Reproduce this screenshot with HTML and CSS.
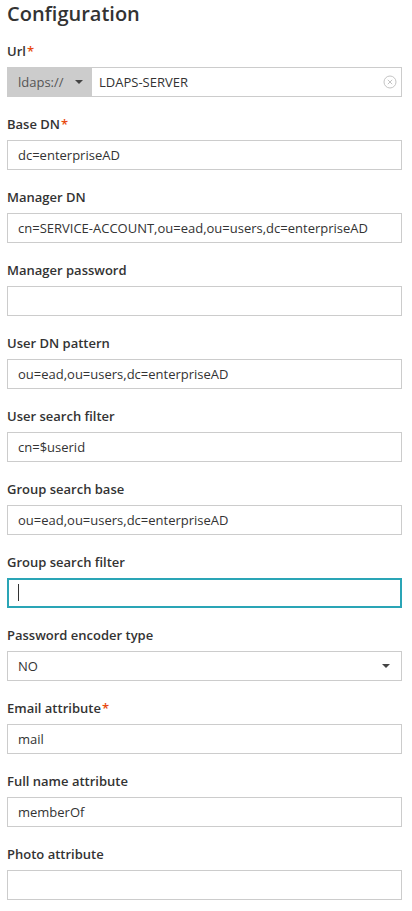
FILE: index.html
```html
<!DOCTYPE html>
<html>
<head>
<meta charset="utf-8">
<link rel="stylesheet" href="styles.css">
</head>
<body>
<div class="page">
  <h1 class="title">Configuration</h1>

  <div class="field">
    <div class="label">Url<span class="req">*</span></div>
    <div class="group">
      <div class="addon"><span>ldaps://</span><span class="caret-down"></span></div>
      <input class="group-input" type="text" value="LDAPS-SERVER">
      <svg class="clear" width="14" height="14" viewBox="0 0 14 14"><circle cx="7" cy="7" r="6" fill="none" stroke="#c4c4c4" stroke-width="1"/><path d="M4.8 4.8 L9.2 9.2 M9.2 4.8 L4.8 9.2" stroke="#c4c4c4" stroke-width="1"/></svg>
    </div>
  </div>

  <div class="field">
    <div class="label">Base DN<span class="req">*</span></div>
    <input class="input" type="text" value="dc=enterpriseAD">
  </div>

  <div class="field">
    <div class="label">Manager DN</div>
    <input class="input" type="text" value="cn=SERVICE-ACCOUNT,ou=ead,ou=users,dc=enterpriseAD">
  </div>

  <div class="field">
    <div class="label">Manager password</div>
    <input class="input" type="password" value="">
  </div>

  <div class="field">
    <div class="label">User DN pattern</div>
    <input class="input" type="text" value="ou=ead,ou=users,dc=enterpriseAD">
  </div>

  <div class="field">
    <div class="label">User search filter</div>
    <input class="input" type="text" value="cn=$userid">
  </div>

  <div class="field">
    <div class="label">Group search base</div>
    <input class="input" type="text" value="ou=ead,ou=users,dc=enterpriseAD">
  </div>

  <div class="field">
    <div class="label">Group search filter</div>
    <div class="focus-wrap">
      <input class="input focused" type="text" value="">
      <span class="text-caret"></span>
    </div>
  </div>

  <div class="field">
    <div class="label">Password encoder type</div>
    <div class="select"><span>NO</span><span class="caret-down"></span></div>
  </div>

  <div class="field">
    <div class="label">Email attribute<span class="req">*</span></div>
    <input class="input" type="text" value="mail">
  </div>

  <div class="field">
    <div class="label">Full name attribute</div>
    <input class="input" type="text" value="memberOf">
  </div>

  <div class="field">
    <div class="label">Photo attribute</div>
    <input class="input" type="text" value="">
  </div>
</div>
</body>
</html>
```

FILE: styles.css
```css
* { box-sizing: border-box; }
html, body {
  margin: 0;
  padding: 0;
  background: #ffffff;
}
body {
  font-family: "Open Sans", "Noto Sans", sans-serif;
  color: #333333;
}
.page {
  padding: 0 10px 0 7px;
}
.title {
  margin: 0 0 14px 0;
  font-size: 20px;
  line-height: 28px;
  font-weight: 600;
  color: #333333;
}
.field {
  margin-bottom: 18px;
}
.label {
  font-size: 13px;
  line-height: 18px;
  font-weight: 600;
  color: #333333;
  margin-bottom: 7px;
}
.req {
  color: #e8490f;
  margin-left: 1px;
  font-weight: 600;
}
.input {
  display: block;
  width: 100%;
  height: 30px;
  border: 1px solid #cccccc;
  border-radius: 0;
  padding: 0 10px;
  font-family: "Open Sans", "Noto Sans", sans-serif;
  font-size: 13px;
  color: #333333;
  background: #ffffff;
  outline: none;
  margin: 0;
}
.focused {
  border-color: #2aa5b6;
  box-shadow: inset 0 0 0 1px #2aa5b6;
}
.focus-wrap {
  position: relative;
}
.text-caret {
  position: absolute;
  left: 11px;
  top: 6px;
  width: 1px;
  height: 17px;
  background: #333333;
}
.group {
  display: flex;
  align-items: stretch;
  height: 30px;
  border: 1px solid #cccccc;
  position: relative;
}
.addon {
  width: 85px;
  margin: -1px 0 -1px -1px;
  background: #cccccc;
  color: #555555;
  font-size: 13px;
  display: flex;
  align-items: center;
  padding: 0 0 0 11px;
  gap: 11px;
}
.group-input {
  flex: 1;
  min-width: 0;
  border: none;
  outline: none;
  padding: 0 30px 0 7px;
  font-family: "Open Sans", "Noto Sans", sans-serif;
  font-size: 13px;
  color: #333333;
  background: #ffffff;
}
.clear {
  position: absolute;
  right: 4px;
  top: 7px;
}
.caret-down {
  display: inline-block;
  width: 0;
  height: 0;
  border-left: 4px solid transparent;
  border-right: 4px solid transparent;
  border-top: 4px solid #444444;
}
.select {
  height: 30px;
  border: 1px solid #cccccc;
  display: flex;
  align-items: center;
  justify-content: space-between;
  padding: 0 11px 0 10px;
  font-size: 13px;
  color: #333333;
}
```
